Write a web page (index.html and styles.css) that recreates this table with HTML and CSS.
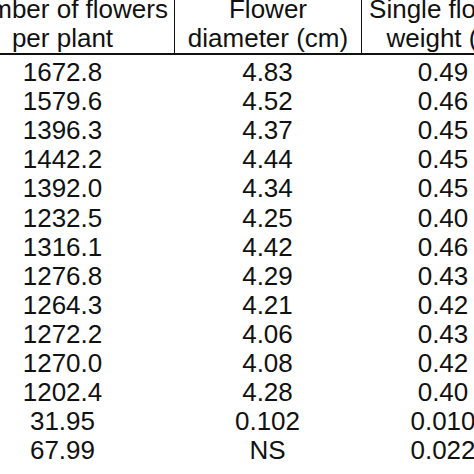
FILE: index.html
```html
<!DOCTYPE html>
<html>
<head>
<meta charset="utf-8">
<link rel="stylesheet" href="styles.css">
</head>
<body>
<table class="data">
  <colgroup>
    <col class="c1"><col class="c2"><col class="c3">
  </colgroup>
  <thead>
    <tr>
      <th>Number of flowers<br>per plant</th>
      <th class="sep">Flower<br>diameter (cm)</th>
      <th class="sep">Single flower<br>weight (g)</th>
    </tr>
  </thead>
  <tbody>
    <tr class="first"><td>1672.8</td><td>4.83</td><td>0.49</td></tr>
    <tr><td>1579.6</td><td>4.52</td><td>0.46</td></tr>
    <tr><td>1396.3</td><td>4.37</td><td>0.45</td></tr>
    <tr><td>1442.2</td><td>4.44</td><td>0.45</td></tr>
    <tr><td>1392.0</td><td>4.34</td><td>0.45</td></tr>
    <tr><td>1232.5</td><td>4.25</td><td>0.40</td></tr>
    <tr><td>1316.1</td><td>4.42</td><td>0.46</td></tr>
    <tr><td>1276.8</td><td>4.29</td><td>0.43</td></tr>
    <tr><td>1264.3</td><td>4.21</td><td>0.42</td></tr>
    <tr><td>1272.2</td><td>4.06</td><td>0.43</td></tr>
    <tr><td>1270.0</td><td>4.08</td><td>0.42</td></tr>
    <tr><td>1202.4</td><td>4.28</td><td>0.40</td></tr>
    <tr><td>31.95</td><td>0.102</td><td>0.010</td></tr>
    <tr><td>67.99</td><td>NS</td><td>0.022</td></tr>
  </tbody>
</table>
</body>
</html>
```
FILE: styles.css
```css
html, body {
  margin: 0;
  padding: 0;
  background: #ffffff;
  overflow: hidden;
  width: 474px;
  height: 474px;
}
.data {
  border-collapse: separate;
  border-spacing: 0;
  table-layout: fixed;
  width: 574px;
  margin-left: -49px;
  margin-top: -5px;
  font-family: "Liberation Sans", Arial, sans-serif;
  font-size: 26px;
  line-height: 29.08px;
  color: #111111;
}
.c1 { width: 223px; }
.c2 { width: 187px; }
.c3 { width: 164px; }
.data th, .data td {
  padding: 0;
  text-align: center;
  font-weight: normal;
  white-space: nowrap;
}
.data th {
  border-bottom: 2px solid #111111;
  vertical-align: top;
}
.data th.sep {
  border-left: 1px solid #111111;
}
.data tbody tr.first td {
  padding-top: 3px;
}
```
